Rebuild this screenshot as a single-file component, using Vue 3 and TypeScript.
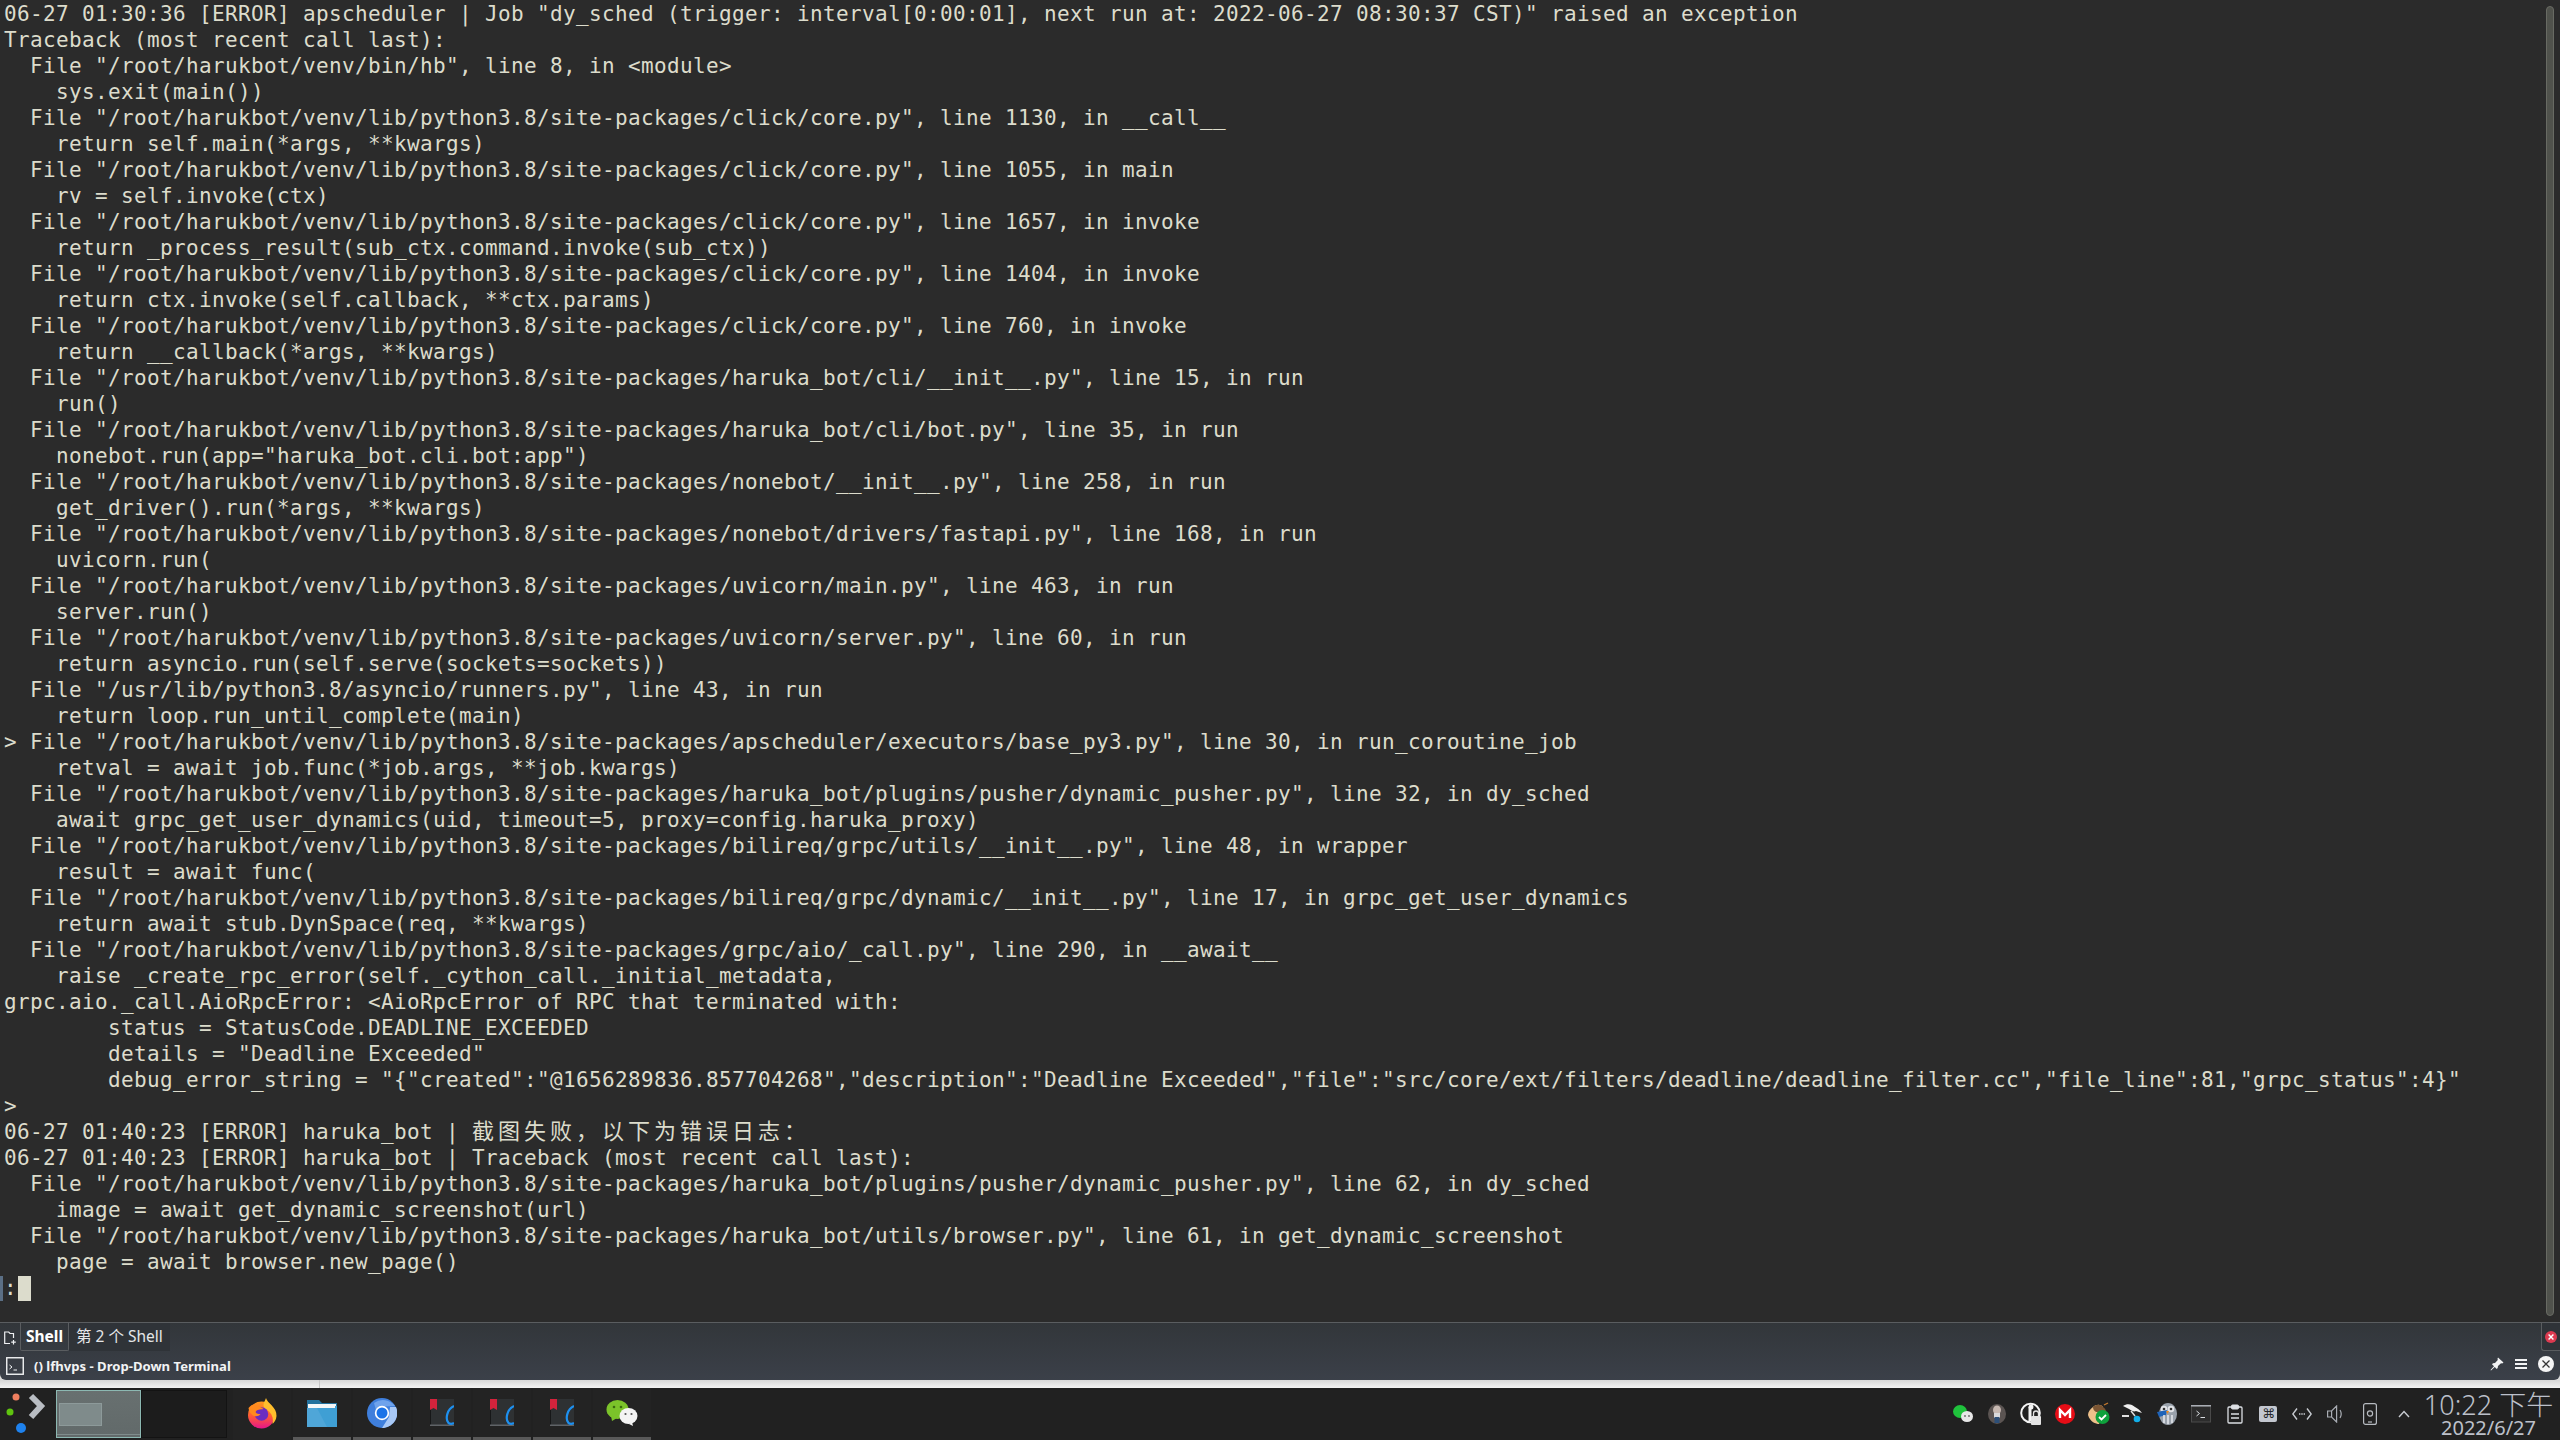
<script setup lang="ts">
const lines: string[] = [
  '06-27 01:30:36 [ERROR] apscheduler | Job "dy_sched (trigger: interval[0:00:01], next run at: 2022-06-27 08:30:37 CST)" raised an exception',
  'Traceback (most recent call last):',
  '  File "/root/harukbot/venv/bin/hb", line 8, in <module>',
  '    sys.exit(main())',
  '  File "/root/harukbot/venv/lib/python3.8/site-packages/click/core.py", line 1130, in __call__',
  '    return self.main(*args, **kwargs)',
  '  File "/root/harukbot/venv/lib/python3.8/site-packages/click/core.py", line 1055, in main',
  '    rv = self.invoke(ctx)',
  '  File "/root/harukbot/venv/lib/python3.8/site-packages/click/core.py", line 1657, in invoke',
  '    return _process_result(sub_ctx.command.invoke(sub_ctx))',
  '  File "/root/harukbot/venv/lib/python3.8/site-packages/click/core.py", line 1404, in invoke',
  '    return ctx.invoke(self.callback, **ctx.params)',
  '  File "/root/harukbot/venv/lib/python3.8/site-packages/click/core.py", line 760, in invoke',
  '    return __callback(*args, **kwargs)',
  '  File "/root/harukbot/venv/lib/python3.8/site-packages/haruka_bot/cli/__init__.py", line 15, in run',
  '    run()',
  '  File "/root/harukbot/venv/lib/python3.8/site-packages/haruka_bot/cli/bot.py", line 35, in run',
  '    nonebot.run(app="haruka_bot.cli.bot:app")',
  '  File "/root/harukbot/venv/lib/python3.8/site-packages/nonebot/__init__.py", line 258, in run',
  '    get_driver().run(*args, **kwargs)',
  '  File "/root/harukbot/venv/lib/python3.8/site-packages/nonebot/drivers/fastapi.py", line 168, in run',
  '    uvicorn.run(',
  '  File "/root/harukbot/venv/lib/python3.8/site-packages/uvicorn/main.py", line 463, in run',
  '    server.run()',
  '  File "/root/harukbot/venv/lib/python3.8/site-packages/uvicorn/server.py", line 60, in run',
  '    return asyncio.run(self.serve(sockets=sockets))',
  '  File "/usr/lib/python3.8/asyncio/runners.py", line 43, in run',
  '    return loop.run_until_complete(main)',
  '> File "/root/harukbot/venv/lib/python3.8/site-packages/apscheduler/executors/base_py3.py", line 30, in run_coroutine_job',
  '    retval = await job.func(*job.args, **job.kwargs)',
  '  File "/root/harukbot/venv/lib/python3.8/site-packages/haruka_bot/plugins/pusher/dynamic_pusher.py", line 32, in dy_sched',
  '    await grpc_get_user_dynamics(uid, timeout=5, proxy=config.haruka_proxy)',
  '  File "/root/harukbot/venv/lib/python3.8/site-packages/bilireq/grpc/utils/__init__.py", line 48, in wrapper',
  '    result = await func(',
  '  File "/root/harukbot/venv/lib/python3.8/site-packages/bilireq/grpc/dynamic/__init__.py", line 17, in grpc_get_user_dynamics',
  '    return await stub.DynSpace(req, **kwargs)',
  '  File "/root/harukbot/venv/lib/python3.8/site-packages/grpc/aio/_call.py", line 290, in __await__',
  '    raise _create_rpc_error(self._cython_call._initial_metadata,',
  'grpc.aio._call.AioRpcError: <AioRpcError of RPC that terminated with:',
  '        status = StatusCode.DEADLINE_EXCEEDED',
  '        details = "Deadline Exceeded"',
  '        debug_error_string = "{"created":"@1656289836.857704268","description":"Deadline Exceeded","file":"src/core/ext/filters/deadline/deadline_filter.cc","file_line":81,"grpc_status":4}"',
  '>',
]
const linesAfter: string[] = [
  '06-27 01:40:23 [ERROR] haruka_bot | Traceback (most recent call last):',
  '  File "/root/harukbot/venv/lib/python3.8/site-packages/haruka_bot/plugins/pusher/dynamic_pusher.py", line 62, in dy_sched',
  '    image = await get_dynamic_screenshot(url)',
  '  File "/root/harukbot/venv/lib/python3.8/site-packages/haruka_bot/utils/browser.py", line 61, in get_dynamic_screenshot',
  '    page = await browser.new_page()',
]
const books: number[] = [1, 2, 3]
</script>

<template>
  <div class="screen">
    <main class="terminal">
      <div class="output">
        <div v-for="(l, i) in lines" :key="i" class="line">{{ l }}</div>
        <div class="line">06-27 01:40:23 [ERROR] haruka_bot | <span class="cjk">截图失败，以下为错误日志：</span></div>
        <div v-for="(l, i) in linesAfter" :key="'a' + i" class="line">{{ l }}</div>
        <div class="line prompt">:<span class="cursor"></span></div>
      </div>
      <div class="marker"></div>
      <div class="scrollbar"></div>
    </main>

    <section class="chrome">
      <div class="tabrow">
        <svg class="newtab" width="13" height="14" viewBox="0 0 13 14" fill="none" stroke="#eef0f2" stroke-width="1.2">
          <path d="M6 12.5H.7V1h4l1.3 1.5h3.5V7" />
          <path d="M9.5 9v4.5M7.2 11.2h4.6" />
        </svg>
        <div class="tab active">Shell</div>
        <div class="tab">第 2 个 Shell</div>
        <div class="tabclose">
          <svg width="14" height="14" viewBox="0 0 14 14">
            <circle cx="7" cy="7" r="6" fill="#dc3a50" />
            <path d="M4.6 4.6l4.8 4.8M9.4 4.6l-4.8 4.8" stroke="#fff" stroke-width="1.4" />
          </svg>
        </div>
      </div>
      <div class="titlerow">
        <svg class="termicon" width="18" height="18" viewBox="0 0 18 18" fill="none" stroke="#f2f3f4">
          <rect x=".75" y=".75" width="16.5" height="16.5" stroke-width="1.4" />
          <path d="M3.5 8l2.5 2-2.5 2M7.5 13h3.5" stroke-width="1" />
        </svg>
        <div class="title">() lfhvps - Drop-Down Terminal</div>
        <div class="winbtns">
          <svg width="14" height="14" viewBox="0 0 14 14" fill="#f2f3f4">
            <path d="M8 .5l5.5 5-1.3 1-1.2-.3L8 9l-.3 2-1 1L4.800 10 1 13.500l-.5-.5L4 9.200 2 7.300l1-1 2-.3 2.800-3-.3-1.200z" />
          </svg>
          <svg width="12" height="10" viewBox="0 0 12 10" fill="#f2f3f4">
            <rect width="12" height="2" /><rect y="4" width="12" height="2" /><rect y="8" width="12" height="2" />
          </svg>
          <svg width="16" height="16" viewBox="0 0 16 16">
            <circle cx="8" cy="8" r="8" fill="#f5f5f5" />
            <path d="M4.500 4.500l7 7M11.500 4.500l-7 7" stroke="#333" stroke-width="1.300" />
          </svg>
        </div>
      </div>
    </section>
    <div class="strip"><div class="stripline"></div></div>

    <footer class="taskbar">
      <svg class="launcher" width="56" height="52" viewBox="0 0 56 52">
        <circle cx="16" cy="9" r="3.500" fill="#ef7f5f" />
        <circle cx="10" cy="24" r="3.500" fill="#5fc40f" />
        <circle cx="21" cy="40" r="5" fill="#1e82ee" />
        <path d="M31 8l10 10-10 11" fill="none" stroke="#b9bdc3" stroke-width="6" />
      </svg>
      <div class="pager">
        <div class="desk current"><div class="deskwin"></div></div>
        <div class="desk"></div>
      </div>
      <div class="slots">
        <div class="slot plain">
          <svg width="32" height="32" viewBox="0 0 32 32">
            <defs>
              <linearGradient id="fx" x1="0" y1="0" x2="0" y2="1">
                <stop offset="0" stop-color="#ff9a1c" /><stop offset=".55" stop-color="#ff5a36" /><stop offset="1" stop-color="#e5148c" />
              </linearGradient>
            </defs>
            <circle cx="15.500" cy="18" r="13.500" fill="url(#fx)" />
            <path d="M20 1c1 5 11 9 10.500 18-.3 4-2 6-4 8 1-5 0-9-3-12-3-3-6-3-6-7 0-3 2-5 2.500-7z" fill="#ffbe2c" />
            <circle cx="15.500" cy="17" r="6.800" fill="#6a2dc0" />
            <path d="M2.500 11c3-4 6-4 7-3 2 1 6 2 8 4-3 .5-7 .5-8 3 1 2 3 2 5 2-2 3-7 3-9 0C3 15 3 13 2.500 11z" fill="#ff8a1e" />
          </svg>
        </div>
        <div class="slot">
          <svg width="30" height="28" viewBox="0 0 30 28">
            <path d="M0 1h12l3 3h15v24H0z" fill="#24729e" />
            <rect x="1" y="5" width="28" height="6" fill="#f5f7f8" />
            <path d="M0 27V9h10l2-2h18v21H0z" fill="#3f9fd4" />
            <path d="M0 9h10l10 19H0z" fill="#4fa6d8" />
            <rect x="2" y="5" width="26" height="4" fill="#f5f7f8" />
          </svg>
        </div>
        <div class="slot">
          <svg width="30" height="30" viewBox="0 0 30 30">
            <circle cx="15" cy="15" r="15" fill="#3f7fdc" />
            <path d="M7 5a15 15 0 0 1 21 3L15 8.500 9 12z" fill="#6fa3ec" />
            <path d="M15 30l7-11 1-10h6a15 15 0 0 1-12 21z" fill="#a8c8f6" />
            <circle cx="15" cy="15" r="7.200" fill="#fff" />
            <circle cx="15" cy="15" r="5.500" fill="#1a73e8" />
          </svg>
        </div>
        <div v-for="b in books" :key="b" class="slot">
          <svg width="24" height="28" viewBox="0 0 24 28">
            <rect width="24" height="27" fill="#2e3133" />
            <rect x="0" y="0" width="1" height="27" fill="#161718" />
            <rect y="25.500" width="24" height="1.500" fill="#5f6367" />
            <path d="M0 0h7v11l-3.500-2L0 11z" fill="#d3233c" />
            <path d="M24 7c-7 3-9 13-5.500 17 1.500 1 3.500 1 5.500 0" fill="none" stroke="#1e90ef" stroke-width="2.200" />
          </svg>
        </div>
        <div class="slot">
          <svg width="32" height="26" viewBox="0 0 32 26">
            <ellipse cx="11.500" cy="9.500" rx="11" ry="9.500" fill="#7bc32a" />
            <path d="M5 16l1 5 5-3z" fill="#7bc32a" />
            <circle cx="8" cy="7" r="1.300" fill="#3a6b10" /><circle cx="15" cy="7" r="1.300" fill="#3a6b10" />
            <ellipse cx="22.500" cy="16" rx="9" ry="8" fill="#f4f4f4" />
            <path d="M26 22l1 4-4-2z" fill="#f4f4f4" />
            <circle cx="19.500" cy="14" r="1.100" fill="#555" /><circle cx="25.500" cy="14" r="1.100" fill="#555" />
          </svg>
        </div>
      </div>

      <div class="tray">
        <span class="cell">
          <svg width="20" height="18" viewBox="0 0 20 18">
            <ellipse cx="7" cy="6.500" rx="7" ry="6.500" fill="#1fc23c" />
            <ellipse cx="14" cy="11.500" rx="6" ry="5.500" fill="#e8e8e8" />
            <circle cx="12" cy="11" r=".9" fill="#666" /><circle cx="16" cy="11" r=".9" fill="#666" />
          </svg>
        </span>
        <span class="cell">
          <svg width="18" height="20" viewBox="0 0 18 20">
            <ellipse cx="9" cy="10" rx="9" ry="10" fill="#5b5452" />
            <ellipse cx="9" cy="6" rx="4" ry="4.500" fill="#c7b9b2" />
            <rect x="6" y="9" width="6" height="5" fill="#d9d9dc" />
            <rect x="6.500" y="13" width="5" height="6" fill="#2d4f78" />
          </svg>
        </span>
        <span class="cell">
          <svg width="22" height="24" viewBox="0 0 22 24" fill="none">
            <circle cx="10.500" cy="11" r="9.300" stroke="#f4f4f4" stroke-width="2" />
            <path d="M10 5v14" stroke="#f4f4f4" stroke-width="3" />
            <circle cx="11" cy="5" r="2.500" fill="#f4f4f4" />
            <rect x="11" y="14" width="10" height="9" rx="1" fill="#e4e4e4" />
            <path d="M13.500 14v-2.500a2.500 2.500 0 0 1 5 0V14" stroke="#e4e4e4" stroke-width="1.300" />
          </svg>
        </span>
        <span class="cell">
          <svg width="20" height="20" viewBox="0 0 20 20">
            <circle cx="10" cy="10" r="10" fill="#e60d16" />
            <path d="M5 14V6l5 5 5-5v8" fill="none" stroke="#fff" stroke-width="2.400" />
          </svg>
        </span>
        <span class="cell">
          <svg width="24" height="24" viewBox="0 0 24 24">
            <path d="M6 5c3-3 8-3 10 0l-1 2 2 5-5 10c-3 0-9-2-11-9 0-3 2-6 5-8z" fill="#eec08a" />
            <path d="M6 5c3-3 8-3 10 0 2 1 3 3 3 5H9C7 9 6 7 6 5z" fill="#7a5533" />
            <path d="M17 3l4-2" stroke="#c77a2e" stroke-width="1.300" />
            <circle cx="15.500" cy="15" r="7" fill="#0ea13c" />
            <path d="M12 15l2.500 2.500 4.500-4.500" fill="none" stroke="#fff" stroke-width="1.800" />
          </svg>
        </span>
        <span class="cell">
          <svg width="22" height="22" viewBox="0 0 22 22">
            <path d="M1 3c4-3 9-2 12 1 2 1 5 3 7 6l-6-2c-2 1-4 0-7-2C5 5 3 4 1 3z" fill="#f0f0f0" />
            <rect x="0" y="12" width="7" height="2" fill="#e0e0e0" />
            <path d="M9 8l4 5" stroke="#ddd" stroke-width="1.500" />
            <circle cx="15" cy="16" r="3.300" fill="#12aee8" />
          </svg>
        </span>
        <span class="cell">
          <svg width="22" height="24" viewBox="0 0 22 24">
            <ellipse cx="12" cy="12" rx="9" ry="11" fill="#9aa2ac" />
            <circle cx="8" cy="7" r="3.300" fill="#e2e4e8" /><circle cx="15" cy="7" r="3.300" fill="#e2e4e8" />
            <circle cx="8" cy="7" r="1.300" fill="#333" /><circle cx="15" cy="7" r="1.300" fill="#333" />
            <path d="M1 10l10-2-1 5-7 2z" fill="#1e63b8" />
            <path d="M10 9l3 0-1.500 3z" fill="#ef8a1e" />
            <path d="M8 13v8M12 13v9M16 13v8" stroke="#e8eaee" stroke-width="1.500" />
          </svg>
        </span>
        <span class="cell">
          <svg width="20" height="18" viewBox="0 0 20 18" fill="none">
            <rect x=".5" y="1" width="19" height="16" fill="#2c2c2c" stroke="#4a4a4a" />
            <rect x="0" y="0" width="20" height="1.500" fill="#a9adb4" />
            <path d="M5.500 6l3 2.500-3 2.500M9.500 12.500h4.500" stroke="#d9dce0" />
          </svg>
        </span>
        <span class="cell">
          <svg width="16" height="20" viewBox="0 0 16 20" fill="none" stroke="#dcdfe4">
            <path d="M4.500 3H2a1 1 0 0 0-1 1v14a1 1 0 0 0 1 1h12a1 1 0 0 0 1-1V4a1 1 0 0 0-1-1h-2.500" stroke-width="1.300" />
            <rect x="4.500" y="1" width="7" height="4" rx="1" fill="#dcdfe4" />
            <path d="M4 10h8M4 14h8" stroke-width="1.300" />
          </svg>
        </span>
        <span class="cell"><span class="cmdkey">⌘</span></span>
        <span class="cell">
          <svg width="20" height="14" viewBox="0 0 20 14" fill="none" stroke="#c8ccd2" stroke-width="1.400">
            <path d="M5 1.500L.8 7 5 12.500M15 1.500L19.200 7 15 12.500" />
            <path d="M7 7h1.400M9.300 7h1.400M11.600 7H13" />
          </svg>
        </span>
        <span class="cell">
          <svg width="18" height="18" viewBox="0 0 18 18" fill="none" stroke="#a9adb4" stroke-width="1.200">
            <path d="M.6 6h4l5-5v16l-5-5h-4zM4.600 6v6M13 5c1.500 2.500 1.500 5.500 0 8" />
          </svg>
        </span>
        <span class="cell">
          <svg width="14" height="22" viewBox="0 0 14 22" fill="none" stroke="#b6bac0" stroke-width="1.200">
            <rect x=".6" y=".6" width="12.800" height="20.800" rx="2" />
            <circle cx="7" cy="10.500" r="2.600" />
            <path d="M5 19h4" />
          </svg>
        </span>
        <span class="cell">
          <svg width="12" height="8" viewBox="0 0 12 8" fill="none" stroke="#c8ccd2" stroke-width="1.400">
            <path d="M1 7l5-5.500L11 7" />
          </svg>
        </span>
      </div>
      <div class="clock">
        <div class="time">10:22 下午</div>
        <div class="date">2022/6/27</div>
      </div>
    </footer>
  </div>
</template>

<style scoped>
.screen {
  width: 2560px;
  height: 1440px;
  display: flex;
  flex-direction: column;
  overflow: hidden;
  background: #dcdcdc;
}
.terminal {
  position: relative;
  height: 1322px;
  background: #2b2b2b;
  flex: none;
}
.output {
  padding: 1px 0 0 4px;
  font-family: "DejaVu Sans Mono", "Noto Sans CJK SC", monospace;
  font-size: 21px;
  letter-spacing: 0.357px;
  color: #dcdccc;
}
.line {
  height: 26px;
  line-height: 26px;
  white-space: pre;
}
.cjk {
  font-family: "Noto Sans CJK SC", sans-serif;
  font-size: 22px;
  line-height: 0;
  letter-spacing: 4px;
}
.prompt {
  display: flex;
  align-items: center;
}
.cursor {
  width: 13px;
  height: 25px;
  margin-left: 0.6px;
  background: #dcdccc;
}
.marker {
  position: absolute;
  left: 0;
  top: 1276px;
  width: 3px;
  height: 25px;
  background: #5b6f85;
}
.scrollbar {
  position: absolute;
  left: 2546px;
  top: 6px;
  width: 8px;
  height: 1310px;
  box-sizing: border-box;
  border-radius: 4px;
  background: #50524c;
  border: 1px solid #686a63;
}
.chrome {
  height: 58px;
  flex: none;
  box-sizing: border-box;
  border-top: 1px solid #5a5d60;
  border-radius: 0 0 6px 6px;
  background: linear-gradient(#32363a, #3b4049);
  color: #f2f3f4;
  font-family: "Noto Sans", sans-serif;
}
.tabrow {
  height: 28px;
  display: flex;
  align-items: stretch;
}
.newtab {
  margin: 8px 3px 0 4px;
}
.tab {
  padding: 0 7px;
  font-size: 15.5px;
  line-height: 27px;
  background: #2f3338;
  font-family: "Noto Sans", "Noto Sans CJK SC", sans-serif;
  color: #e4e6e8;
}
.tab.active {
  width: 49px;
  padding: 0 5px;
  box-sizing: border-box;
  font-weight: 700;
  color: #fff;
  background: transparent;
  border: 1px solid #5a5d60;
  border-top: none;
  border-radius: 0 0 2px 2px;
}
.tabclose {
  margin-left: auto;
  width: 19px;
  box-sizing: border-box;
  border-left: 1px solid #5a5d60;
  border-bottom: 1px solid #5a5d60;
  border-radius: 0 0 0 3px;
  display: flex;
  align-items: center;
  justify-content: center;
  background: #2f3338;
}
.titlerow {
  height: 29px;
  display: flex;
  align-items: center;
}
.termicon {
  margin-left: 6px;
  flex: none;
}
.title {
  margin-left: 10px;
  font-size: 13.100px;
  font-weight: 700;
}
.winbtns {
  margin-left: auto;
  margin-right: 6px;
  margin-bottom: 3px;
  display: flex;
  align-items: center;
  gap: 11px;
}
.strip {
  height: 8px;
  flex: none;
  background: linear-gradient(#d8d8d8, #f4f4f4);
}
.stripline {
  width: 1px;
  height: 8px;
  margin-left: 319px;
  background: #c8c8c8;
}
.taskbar {
  flex: 1;
  display: flex;
  align-items: stretch;
  background: #212121;
}
.launcher {
  flex: none;
}
.pager {
  display: flex;
  margin-top: 2px;
  height: 48px;
}
.desk {
  width: 86px;
  box-sizing: border-box;
  background: #1c1c1c;
  border: 1px solid #131313;
}
.desk.current {
  width: 85px;
  padding: 12px 0 0 2px;
  background: linear-gradient(#687070, #626a6a 94%, #7f8c8c 94%, #7f8c8c 96%, #626a6a 96%);
  border-color: #8cb8b2;
}
.deskwin {
  width: 43px;
  height: 23px;
  box-sizing: border-box;
  background: #7f8b8b;
  border: 1px solid #8d9a9a;
}
.slots {
  display: flex;
  margin-left: 6px;
}
.slot {
  width: 58px;
  margin-right: 2px;
  box-sizing: border-box;
  display: flex;
  align-items: center;
  justify-content: center;
  background: #232323;
  border-bottom: 3px solid #595959;
}
.slot.plain {
  border-bottom-color: transparent;
}
.tray {
  margin-left: auto;
  display: flex;
  align-items: center;
}
.cell {
  width: 33.900px;
  display: flex;
  align-items: center;
  justify-content: center;
}
.cmdkey {
  width: 18px;
  height: 16px;
  border-radius: 2px;
  background: #c3c7cf;
  color: #26282c;
  font-family: "DejaVu Sans", sans-serif;
  font-size: 13px;
  line-height: 16px;
  text-align: center;
}
.clock {
  width: 135px;
  margin-right: 4px;
  flex: none;
  text-align: center;
  color: #bcc0ca;
  font-family: "Noto Sans", "Noto Sans CJK SC", sans-serif;
  white-space: nowrap;
}
.time {
  font-size: 27px;
  font-weight: 300;
  line-height: 28px;
  margin-top: 3px;
}
.date {
  font-size: 20px;
  line-height: 18px;
}
</style>

<style>
html,
body {
  margin: 0;
  background: #212121;
}
</style>
